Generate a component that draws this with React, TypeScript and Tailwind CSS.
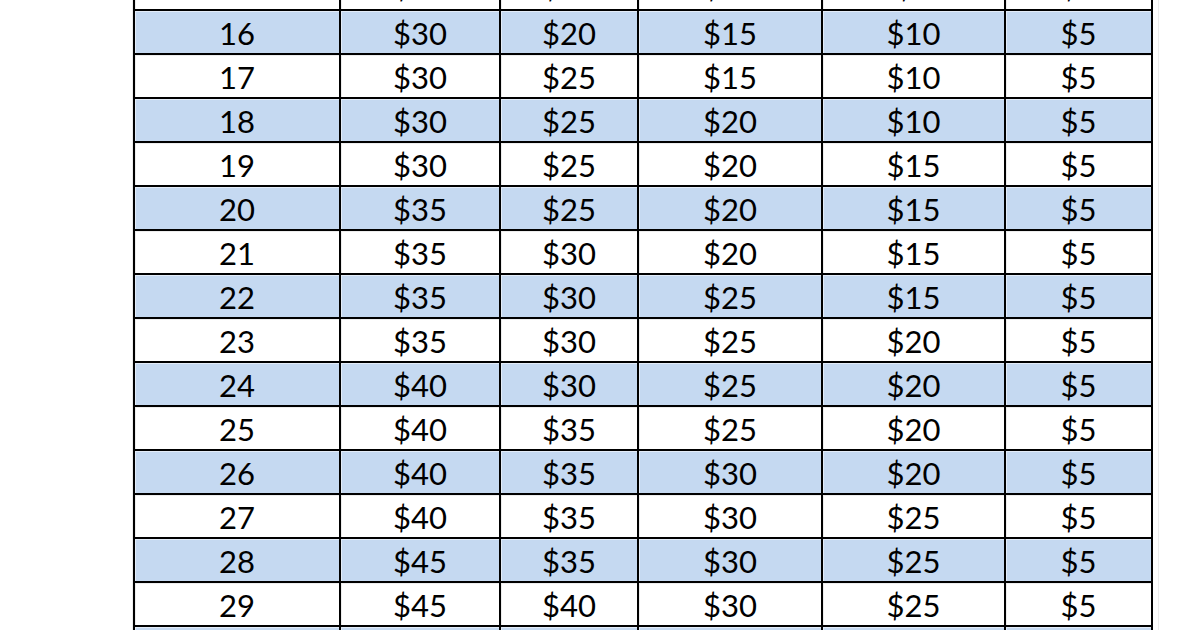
import React from "react";

const rows: [number, number[]][] = [
  [15, [30, 20, 15, 5, 5]],
  [16, [30, 20, 15, 10, 5]],
  [17, [30, 25, 15, 10, 5]],
  [18, [30, 25, 20, 10, 5]],
  [19, [30, 25, 20, 15, 5]],
  [20, [35, 25, 20, 15, 5]],
  [21, [35, 30, 20, 15, 5]],
  [22, [35, 30, 25, 15, 5]],
  [23, [35, 30, 25, 20, 5]],
  [24, [40, 30, 25, 20, 5]],
  [25, [40, 35, 25, 20, 5]],
  [26, [40, 35, 30, 20, 5]],
  [27, [40, 35, 30, 25, 5]],
  [28, [45, 35, 30, 25, 5]],
  [29, [45, 40, 30, 25, 5]],
  [30, [45, 40, 35, 25, 5]],
];

export default function App() {
  return (
    <div className="h-[630px] w-[1200px] overflow-hidden bg-white">
      <div className="flex">
        <div className="w-[133px] shrink-0 border-r border-[#ececec]" />
        <div className="-mt-[33px] flex flex-col border-l-2 border-black">
          {rows.map(([n, vals]) => {
            const blue = n % 2 === 0;
            const cell =
              "flex h-[44px] items-center justify-center border-r-2 border-b-2 border-black text-[31px] leading-none text-black " +
              (n === 15 ? "pb-[4px] " : "pt-[2px] ") +
              (blue
                ? "bg-[#c5d9f1] shadow-[inset_1px_1px_0_#e3ecf8]"
                : "bg-white shadow-[inset_1px_1px_0_#ededed]");
            return (
              <div
                key={n}
                className="grid grid-cols-[206px_160px_138px_184px_183px_147px]"
                style={{ fontFamily: "Lato, 'Open Sans', sans-serif" }}
              >
                <div className={cell}>{n}</div>
                {vals.map((v, i) => (
                  <div key={i} className={cell}>
                    ${v}
                  </div>
                ))}
              </div>
            );
          })}
        </div>
        <div className="w-[6px] shrink-0 border-r border-[#ececec]" />
      </div>
    </div>
  );
}
